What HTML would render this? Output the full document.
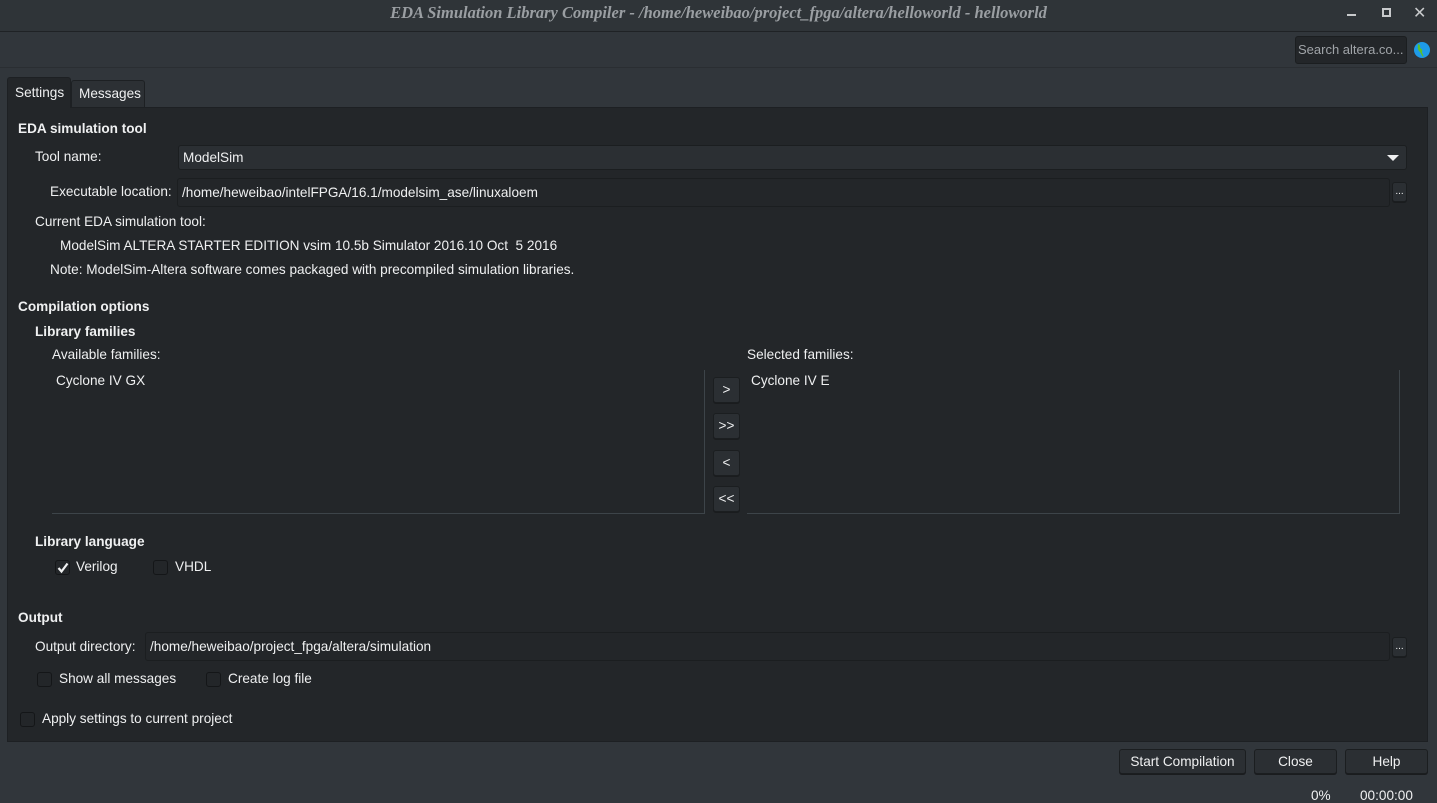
<!DOCTYPE html>
<html><head><meta charset="utf-8"><style>
*{box-sizing:border-box;margin:0;padding:0}
body{width:1437px;height:802px;background:#31363b;color:#eff0f1;font-family:"Liberation Sans","DejaVu Sans",sans-serif;font-size:13.6px;position:relative;overflow:hidden}
.a{position:absolute;white-space:nowrap}
.b{font-weight:bold}
.field{position:absolute;background:#232629;border:1px solid #1b1e20;border-radius:3px;padding-left:4px;line-height:26px}
.btn{position:absolute;background:#2b2f33;border:1px solid #1b1e20;border-radius:3px;text-align:center;box-shadow:0 1px 0 #1a1c1e}
.cb{position:absolute;width:15px;height:15px;border:1px solid #141618;border-radius:3px;background:#232629}
</style></head><body>
<div class="a" style="left:0;top:0;width:1437px;height:32px;background:#2f3438;border-bottom:1px solid #1f2225"></div>
<div class="a" style="left:0;top:3px;width:1437px;text-align:center;font-family:'Liberation Serif',serif;font-style:italic;font-weight:bold;font-size:16.5px;color:#9a9ea2">EDA Simulation Library Compiler - /home/heweibao/project_fpga/altera/helloworld - helloworld</div>
<div class="a" style="left:1347px;top:14px;width:9px;height:2px;background:#c8cacc"></div>
<div class="a" style="left:1382px;top:8px;width:9px;height:9px;border:2px solid #c8cacc"></div>
<div class="a" style="left:1413px;top:3px;font-size:16px;color:#c8cacc">✕</div>
<div class="a" style="left:0;top:67px;width:1437px;height:1px;background:#2a2e32"></div>
<div class="field" style="left:1295px;top:36px;width:112px;height:28px;color:#a0a4a8;padding-left:2px;font-size:13px">Search altera.co...</div>
<svg class="a" style="left:1413px;top:41px" width="18" height="18" viewBox="0 0 18 18"><circle cx="9" cy="9" r="8" fill="#1e9be8"/><path d="M5 3 Q8 4 7 7 Q10 8 9 12 Q11 14 10 16 Q8 13 7 11 Q4 9 5 3Z" fill="#5cbf2a"/></svg>

<div class="a" style="left:7px;top:107px;width:1421px;height:635px;background:#232629;border:1px solid #1d2023"></div>
<div class="a" style="left:7px;top:77px;width:64px;height:31px;background:#232629;border:1px solid #1d2023;border-bottom:none;border-radius:3px 3px 0 0;padding:7px 0 0 7px">Settings</div>
<div class="a" style="left:71px;top:80px;width:74px;height:27px;background:#2c3034;border:1px solid #1d2023;border-bottom:none;border-radius:3px 3px 0 0;padding:5px 0 0 7px">Messages</div>

<div class="a b" style="left:18px;top:121px">EDA simulation tool</div>
<div class="a" style="left:35px;top:149px">Tool name:</div>
<div class="field" style="left:178px;top:145px;width:1229px;height:25px;background:#2b2f33;line-height:23px">ModelSim</div>
<div class="a" style="left:1387px;top:155px;width:0;height:0;border-left:6px solid transparent;border-right:6px solid transparent;border-top:6px solid #eff0f1"></div>
<div class="a" style="left:50px;top:184px">Executable location:</div>
<div class="field" style="left:177px;top:178px;width:1213px;height:29px;line-height:27px">/home/heweibao/intelFPGA/16.1/modelsim_ase/linuxaloem</div>
<div class="btn" style="left:1392px;top:182px;width:15px;height:20px;line-height:18px;font-size:10px">...</div>
<div class="a" style="left:35px;top:214px">Current EDA simulation tool:</div>
<div class="a" style="left:60px;top:238px">ModelSim ALTERA STARTER EDITION vsim 10.5b Simulator 2016.10 Oct&nbsp; 5 2016</div>
<div class="a" style="left:50px;top:262px">Note: ModelSim-Altera software comes packaged with precompiled simulation libraries.</div>

<div class="a b" style="left:18px;top:299px">Compilation options</div>
<div class="a b" style="left:35px;top:324px">Library families</div>
<div class="a" style="left:52px;top:347px">Available families:</div>
<div class="a" style="left:747px;top:347px">Selected families:</div>
<div class="a" style="left:52px;top:370px;width:653px;height:144px;border-right:1px solid #3d4449;border-bottom:1px solid #3d4449"></div>
<div class="a" style="left:56px;top:373px">Cyclone IV GX</div>
<div class="a" style="left:747px;top:370px;width:653px;height:144px;border-right:1px solid #3d4449;border-bottom:1px solid #3d4449"></div>
<div class="a" style="left:751px;top:373px">Cyclone IV E</div>
<div class="btn" style="left:713px;top:377px;width:27px;height:26px;line-height:24px">&gt;</div>
<div class="btn" style="left:713px;top:413px;width:27px;height:26px;line-height:24px">&gt;&gt;</div>
<div class="btn" style="left:713px;top:450px;width:27px;height:26px;line-height:24px">&lt;</div>
<div class="btn" style="left:713px;top:486px;width:27px;height:26px;line-height:24px">&lt;&lt;</div>

<div class="a b" style="left:35px;top:534px">Library language</div>
<div class="cb" style="left:55px;top:560px"></div>
<svg class="a" style="left:56px;top:561px" width="14" height="14" viewBox="0 0 14 14"><path d="M2.5 7 L5.5 10.5 L11.5 2.5" stroke="#eff0f1" stroke-width="2.2" fill="none"/></svg>
<div class="a" style="left:76px;top:559px">Verilog</div>
<div class="cb" style="left:153px;top:560px"></div>
<div class="a" style="left:175px;top:559px">VHDL</div>

<div class="a b" style="left:18px;top:610px">Output</div>
<div class="a" style="left:35px;top:639px">Output directory:</div>
<div class="field" style="left:145px;top:632px;width:1245px;height:29px;line-height:27px">/home/heweibao/project_fpga/altera/simulation</div>
<div class="btn" style="left:1392px;top:637px;width:15px;height:20px;line-height:18px;font-size:10px">...</div>
<div class="cb" style="left:37px;top:672px"></div>
<div class="a" style="left:59px;top:671px">Show all messages</div>
<div class="cb" style="left:206px;top:672px"></div>
<div class="a" style="left:228px;top:671px">Create log file</div>
<div class="cb" style="left:20px;top:712px"></div>
<div class="a" style="left:42px;top:711px">Apply settings to current project</div>

<div class="btn" style="left:1119px;top:749px;width:127px;height:25px;line-height:23px">Start Compilation</div>
<div class="btn" style="left:1254px;top:749px;width:83px;height:25px;line-height:23px">Close</div>
<div class="btn" style="left:1345px;top:749px;width:83px;height:25px;line-height:23px">Help</div>
<div class="a" style="left:1311px;top:788px">0%</div>
<div class="a" style="left:1360px;top:788px">00:00:00</div>
</body></html>
